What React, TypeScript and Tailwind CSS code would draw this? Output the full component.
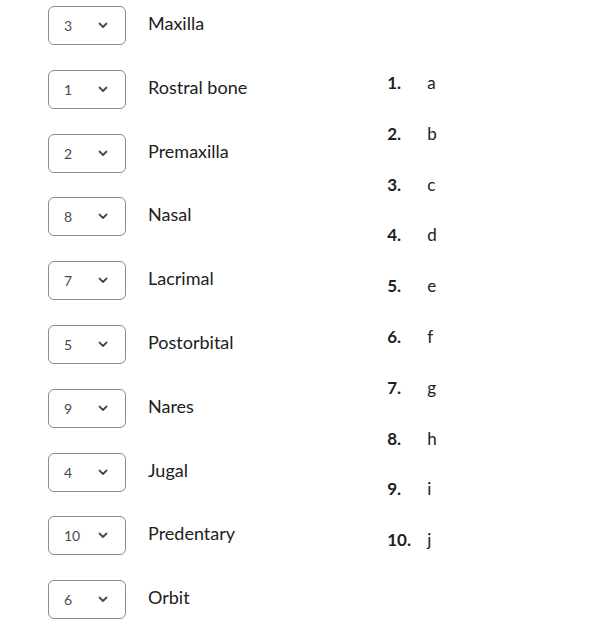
import React from "react";

const pairs = [
  { value: "3", label: "Maxilla" },
  { value: "1", label: "Rostral bone" },
  { value: "2", label: "Premaxilla" },
  { value: "8", label: "Nasal" },
  { value: "7", label: "Lacrimal" },
  { value: "5", label: "Postorbital" },
  { value: "9", label: "Nares" },
  { value: "4", label: "Jugal" },
  { value: "10", label: "Predentary" },
  { value: "6", label: "Orbit" },
];

const choices = ["a", "b", "c", "d", "e", "f", "g", "h", "i", "j"];

function Chevron() {
  return (
    <svg width="10" height="7" viewBox="0 0 10 7" fill="none">
      <path d="M1.5 1.5L5 5L8.5 1.5" stroke="#494c4e" strokeWidth="1.8" strokeLinecap="round" strokeLinejoin="round" />
    </svg>
  );
}

export default function App() {
  return (
    <div className="w-[616px] h-[640px] bg-white font-['Lato','Liberation_Sans',sans-serif] text-[#202122] flex">
      {/* matching dropdowns */}
      <div className="flex flex-col gap-[24.8px] pt-[6px] pl-[48px]">
        {pairs.map((p) => (
          <div key={p.label} className="flex items-center">
            <div className="w-[78px] h-[39px] border border-[#868c8f] rounded-[6px] flex items-center justify-between pl-[15px] pr-[17px]">
              <span className="text-[14px] text-[#494c4e]">{p.value}</span>
              <Chevron />
            </div>
            <span className="ml-[22px] mb-[4px] text-[18px]">{p.label}</span>
          </div>
        ))}
      </div>

      {/* answer list */}
      <ol className="ml-[140px] pt-[70px]">
        {choices.map((c, i) => (
          <li key={c} className="h-[50.8px] flex items-start text-[17px]">
            <span className="w-[40px] font-bold">{i + 1}.</span>
            <span>{c}</span>
          </li>
        ))}
      </ol>
    </div>
  );
}
